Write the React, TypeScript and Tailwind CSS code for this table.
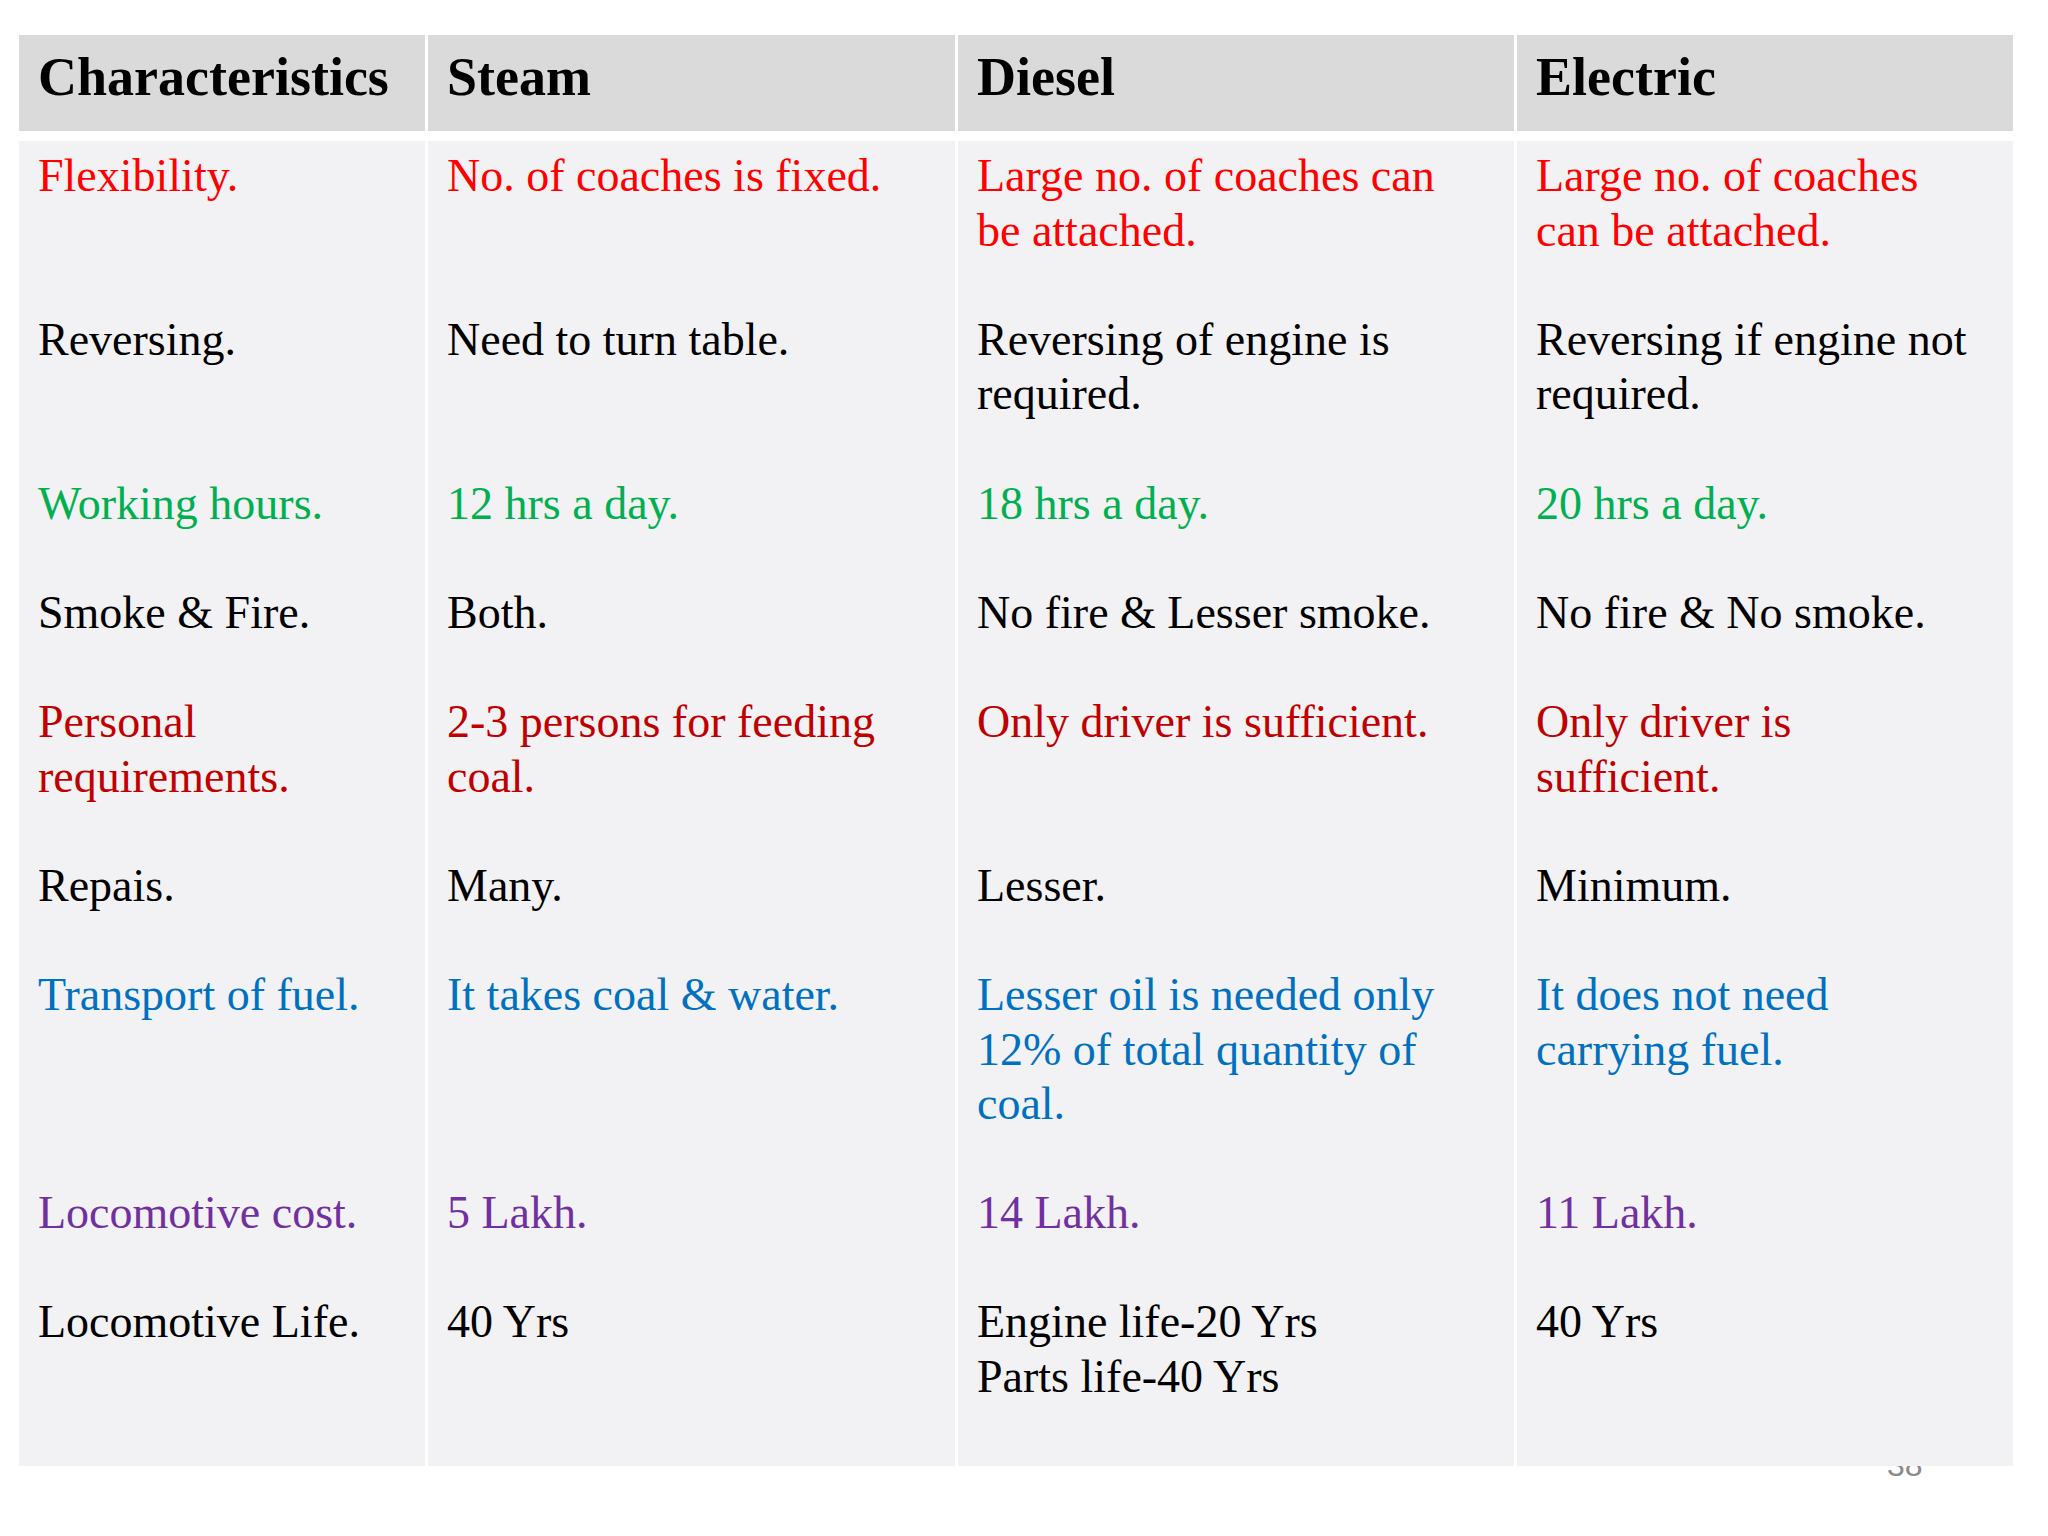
import React from "react";

type Row = { color: string; cells: string[][]; last?: boolean };

const rows: Row[] = [
  {
    color: "text-[#ff0000]",
    cells: [
      ["Flexibility."],
      ["No. of coaches is fixed."],
      ["Large no. of coaches can", "be attached."],
      ["Large no. of coaches", "can be attached."],
    ],
  },
  {
    color: "text-black",
    cells: [
      ["Reversing."],
      ["Need to turn table."],
      ["Reversing of engine is", "required."],
      ["Reversing if engine not", "required."],
    ],
  },
  {
    color: "text-[#00b050]",
    cells: [["Working hours."], ["12 hrs a day."], ["18 hrs a day."], ["20 hrs a day."]],
  },
  {
    color: "text-black",
    cells: [["Smoke & Fire."], ["Both."], ["No fire & Lesser smoke."], ["No fire & No smoke."]],
  },
  {
    color: "text-[#c00000]",
    cells: [
      ["Personal", "requirements."],
      ["2-3 persons for feeding", "coal."],
      ["Only driver is sufficient."],
      ["Only driver is", "sufficient."],
    ],
  },
  {
    color: "text-black",
    cells: [["Repais."], ["Many."], ["Lesser."], ["Minimum."]],
  },
  {
    color: "text-[#0070c0]",
    cells: [
      ["Transport of fuel."],
      ["It takes coal & water."],
      ["Lesser oil is needed only", "12% of total quantity of", "coal."],
      ["It does not need", "carrying fuel."],
    ],
  },
  {
    color: "text-[#7030a0]",
    cells: [["Locomotive cost."], ["5 Lakh."], ["14 Lakh."], ["11 Lakh."]],
  },
  {
    color: "text-black",
    last: true,
    cells: [
      ["Locomotive Life."],
      ["40 Yrs"],
      ["Engine life-20 Yrs", "Parts life-40 Yrs"],
      ["40 Yrs"],
    ],
  },
];

const headers = ["Characteristics", "Steam", "Diesel", "Electric"];

export default function App() {
  return (
    <div className="relative w-[2048px] h-[1536px] bg-white overflow-hidden font-['Liberation_Serif',serif]">
      <div className="absolute left-[1887px] top-[1449px] text-[32px] leading-[32px] text-[#8a8a8a] font-['Liberation_Sans',sans-serif]">
        38
      </div>
      <div className="relative z-10 pt-[35px] pl-[19px]">
        <div className="w-[1994px] bg-white">
          <div className="grid grid-cols-[406px_527px_556px_496px] gap-x-[3px] mb-[10px]">
            {headers.map((h) => (
              <div
                key={h}
                className="h-[96px] bg-[#dadada] pl-[19px] pt-[15px] text-[54px] leading-[54px] font-bold text-black whitespace-nowrap"
              >
                {h}
              </div>
            ))}
          </div>
          {rows.map((r, i) => (
            <div key={i} className="grid grid-cols-[406px_527px_556px_496px] gap-x-[3px]">
              {r.cells.map((lines, j) => (
                <div
                  key={j}
                  className={`bg-[#f2f1f3] pl-[19px] pt-[8px] text-[46px] leading-[54.6px] whitespace-nowrap ${r.color} ${
                    r.last ? "pb-[61px]" : "pb-[46.6px]"
                  }`}
                >
                  {lines.map((l, k) => (
                    <div key={k}>{l}</div>
                  ))}
                </div>
              ))}
            </div>
          ))}
        </div>
      </div>
    </div>
  );
}
